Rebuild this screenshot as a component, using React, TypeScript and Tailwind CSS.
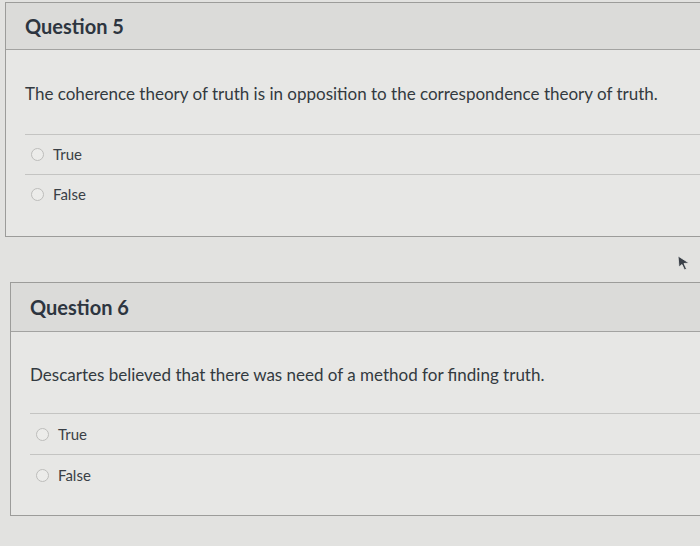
import { useState } from "react"

type Q = { title: string; text: string; options: string[] }

const questions: Q[] = [
  {
    title: "Question 5",
    text: "The coherence theory of truth is in opposition to the correspondence theory of truth.",
    options: ["True", "False"],
  },
  {
    title: "Question 6",
    text: "Descartes believed that there was need of a method for finding truth.",
    options: ["True", "False"],
  },
]

type Sizes = { card: string; header: string; body: string; text: string; row: string }

const sizes: Sizes[] = [
  { card: "ml-[5px]", header: "h-[47px]", body: "pt-[32px] pb-[22px]", text: "mb-[28px]", row: "h-[40px]" },
  { card: "ml-[10px] mt-[45px]", header: "h-[49px]", body: "pt-[31px] pb-[20px]", text: "mb-[26px]", row: "h-[41px]" },
]

function QuestionCard({ q, s }: { q: Q; s: Sizes }) {
  const [picked, setPicked] = useState<string | null>(null)
  return (
    <div className={`border border-[#9c9c9a] bg-[#e7e7e5] mr-[-20px] ${s.card}`}>
      <div className={`${s.header} flex items-center px-[19px] bg-[#dbdbd9] border-b border-[#a3a3a1]`}>
        <h2 className="text-[20px] font-bold text-[#2d3540]">{q.title}</h2>
      </div>
      <div className={`px-[19px] ${s.body}`}>
        <p className={`text-[17px] leading-[24px] text-[#333a40] ${s.text}`}>{q.text}</p>
        <div>
          {q.options.map((o) => (
            <label
              key={o}
              className={`${s.row} flex items-center gap-[9px] pl-[6px] border-t border-[#c4c4c2] cursor-pointer`}
            >
              <span className="w-[13px] h-[13px] rounded-full border border-[#bdbdbb] bg-[#ececea] flex items-center justify-center">
                {picked === o && <span className="w-[6px] h-[6px] rounded-full bg-[#555]" />}
              </span>
              <input
                type="radio"
                className="hidden"
                checked={picked === o}
                onChange={() => setPicked(o)}
              />
              <span className="text-[15px] text-[#3a4046]">{o}</span>
            </label>
          ))}
        </div>
      </div>
    </div>
  )
}

export default function App() {
  return (
    <div
      className="relative w-[700px] h-[546px] overflow-hidden bg-[#e2e2e0] pt-[2px]"
      style={{ fontFamily: "Lato, 'Open Sans', sans-serif" }}
    >
      {questions.map((q, i) => (
        <QuestionCard key={q.title} q={q} s={sizes[i]} />
      ))}
      <svg className="absolute left-[676px] top-[254px]" width="16" height="18" viewBox="0 0 16 18">
        <path d="M2 2 L13 9 L8 9.5 L10.5 15 L8.5 16 L6 10.5 L3 13 Z" fill="#3a4048" stroke="#e8e8e6" strokeWidth="0.8" />
      </svg>
    </div>
  )
}
